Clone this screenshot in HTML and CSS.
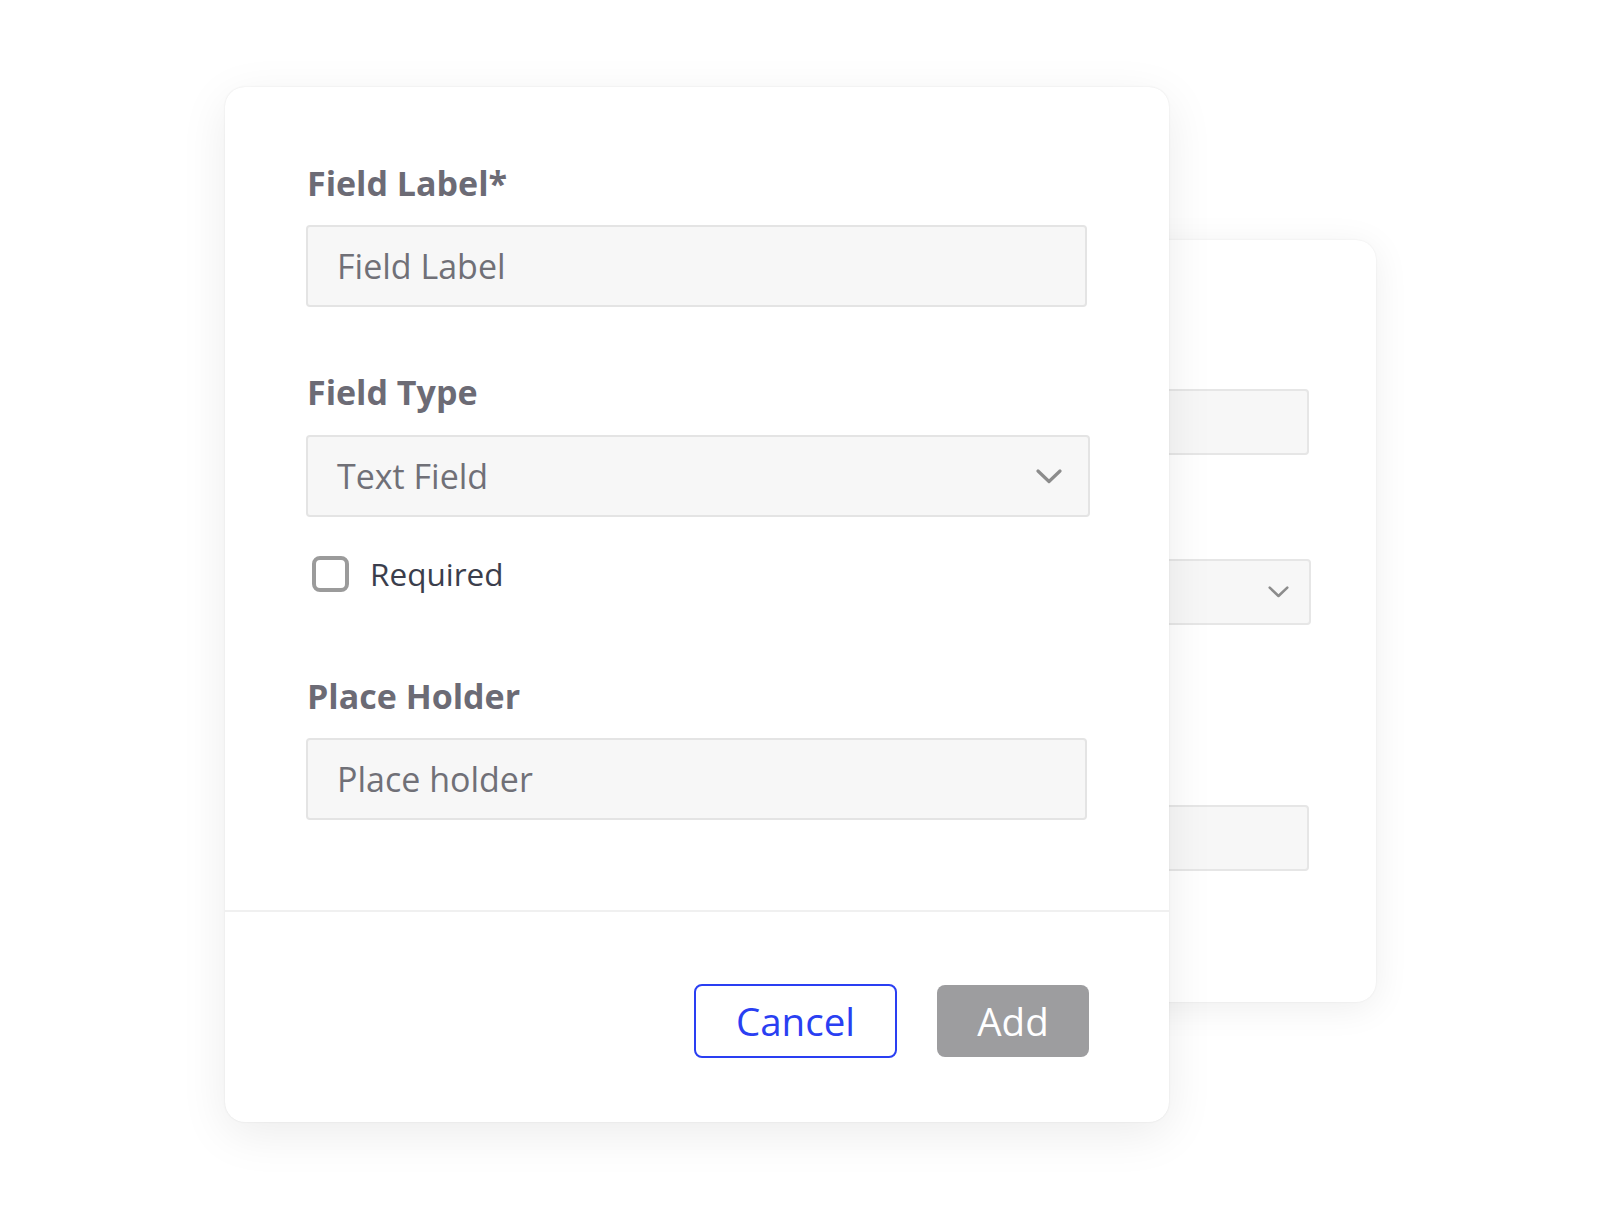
FILE: index.html
```html
<!DOCTYPE html>
<html lang="en">
<head>
    <meta charset="UTF-8">
    <meta name="viewport" content="width=device-width, initial-scale=1.0">
    <title>Add Field</title>
    <link rel="stylesheet" href="styles.css">
</head>
<body>
    <div class="stage">
        <!-- card peeking out behind the dialog -->
        <div class="back-card">
            <div class="ghost-input"></div>
            <div class="ghost-input ghost-select">
                <svg class="chevron small" viewBox="0 0 26 15"><path d="M2 2 L13 12.5 L24 2"/></svg>
            </div>
            <div class="ghost-input ghost-last"></div>
        </div>

        <div class="card">
            <div class="card-body">
                <label class="label">Field Label*</label>
                <div class="input">Field Label</div>

                <label class="label gap-top">Field Type</label>
                <div class="input select">
                    <span>Text Field</span>
                    <svg class="chevron" viewBox="0 0 26 15"><path d="M2 2 L13 12.5 L24 2"/></svg>
                </div>

                <div class="check-row">
                    <span class="checkbox"></span>
                    <span class="check-text">Required</span>
                </div>

                <label class="label">Place Holder</label>
                <div class="input">Place holder</div>
            </div>
            <div class="card-footer">
                <button class="btn btn-outline">Cancel</button>
                <button class="btn btn-disabled">Add</button>
            </div>
        </div>
    </div>
</body>
</html>
```

FILE: styles.css
```css
body {
    margin: 0;
    background: #fff;
    font-family: "Open Sans", "Noto Sans", sans-serif;
}
.stage {
    position: relative;
    width: 1600px;
    height: 1209px;
    padding: 87px 0 0 225px;
    box-sizing: border-box;
    overflow: hidden;
}

.back-card {
    position: absolute;
    left: 640px;
    top: 240px;
    width: 736px;
    height: 762px;
    padding: 149px 67px 0 65px;
    box-sizing: border-box;
    background: #fff;
    border-radius: 20px;
    box-shadow: 0 6px 36px rgba(0, 0, 0, 0.07), 0 0 2px rgba(0, 0, 0, 0.08);
}
.ghost-input {
    height: 66px;
    box-sizing: border-box;
    background: #f7f7f7;
    border: 2px solid #e6e6e6;
    border-radius: 4px;
}
.ghost-select {
    margin: 104px -2px 0 0;
    display: flex;
    align-items: center;
    justify-content: flex-end;
    padding-right: 20px;
}
.ghost-last {
    margin-top: 180px;
}

.card {
    position: relative;
    width: 944px;
    height: 1035px;
    box-sizing: border-box;
    background: #fff;
    border-radius: 20px;
    box-shadow: 0 12px 48px rgba(0, 0, 0, 0.08), 0 0 2px rgba(0, 0, 0, 0.1);
    display: flex;
    flex-direction: column;
}
.card-body {
    padding: 74px 82px 90px 81px;
    border-bottom: 2px solid #f0f0f0;
    display: flex;
    flex-direction: column;
}
.label {
    display: block;
    font-size: 34px;
    line-height: 45px;
    font-weight: 700;
    color: #6c6b75;
    margin-left: 1px;
}
.gap-top {
    margin-top: 63px;
}
.input {
    margin-top: 19px;
    height: 82px;
    box-sizing: border-box;
    background: #f7f7f7;
    border: 2px solid #e4e4e4;
    border-radius: 4px;
    padding: 0 29px;
    display: flex;
    align-items: center;
    font-size: 34px;
    line-height: 45px;
    color: #707077;
}
.select {
    margin-top: 20px;
    margin-right: -3px;
    justify-content: space-between;
    padding-right: 26px;
}
.chevron {
    width: 26px;
    height: 15px;
    fill: none;
    stroke: #8c8c8c;
    stroke-width: 3.2;
    stroke-linecap: round;
    stroke-linejoin: round;
}
.chevron.small {
    width: 21px;
    height: 12px;
}

.check-row {
    margin: 36px 0 79px 6px;
    height: 42px;
    display: flex;
    align-items: center;
}
.checkbox {
    width: 37px;
    height: 36px;
    box-sizing: border-box;
    border: 4px solid #9b9b9b;
    border-radius: 8px;
}
.check-text {
    margin-left: 21px;
    font-size: 31.5px;
    line-height: 42px;
    color: #3b3e4c;
}

.card-footer {
    display: flex;
    justify-content: flex-end;
    align-items: center;
    gap: 40px;
    padding: 72px 80px 0 0;
}
.btn {
    font-family: "Open Sans", "Noto Sans", sans-serif;
    font-size: 38.5px;
    line-height: 50px;
    border-radius: 8px;
    box-sizing: border-box;
    padding: 0;
}
.btn-outline {
    width: 203px;
    height: 74px;
    background: #fff;
    border: 2px solid #2a3ff2;
    color: #2a3ff2;
}
.btn-disabled {
    width: 152px;
    height: 72px;
    background: #9d9d9f;
    border: none;
    color: #fff;
}
```
